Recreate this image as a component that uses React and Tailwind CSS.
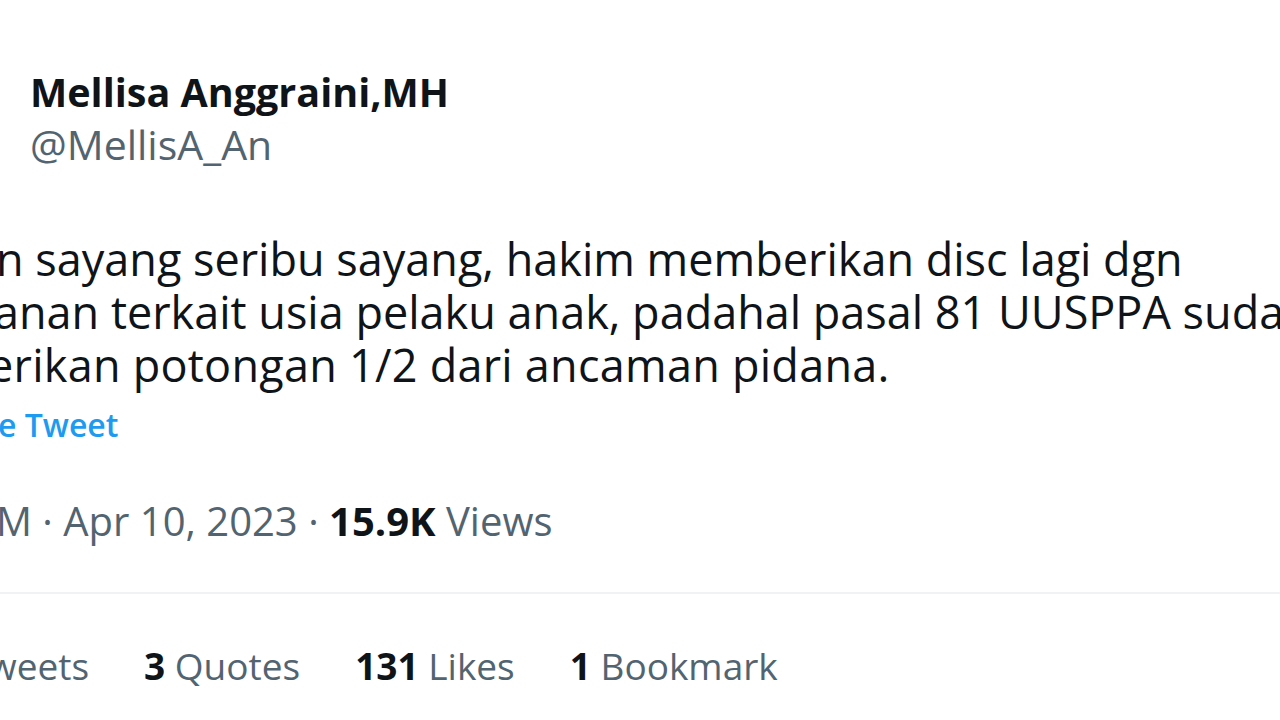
export default function App() {
  const font = { fontFamily: '"Open Sans", "Noto Sans", Arial, sans-serif' };
  return (
    <div className="w-[1280px] h-[720px] bg-white overflow-hidden text-[#0f1419]" style={font}>
      <div className="pl-[30px] pt-[68px]">
        <div className="text-[39.5px] font-bold leading-[48px] text-[#0f1419]">Mellisa Anggraini,MH</div>
        <div className="text-[41px] leading-[56px] text-[#536471]">@MellisA_An</div>
      </div>
      <div className="mt-[60px] -ml-[4px] text-[45px] leading-[53px] whitespace-nowrap">
        <div>n sayang seribu sayang, hakim memberikan disc lagi dgn</div>
        <div className="-ml-[2px]">anan terkait usia pelaku anak, padahal pasal 81 UUSPPA sudah</div>
        <div className="-ml-[8px] tracking-[0.25px]">erikan potongan 1/2 dari ancaman pidana.</div>
      </div>
      <div className="mt-[14px] -ml-[2px] text-[32px] leading-[40px] font-semibold text-[#1d9bf0] whitespace-nowrap">e Tweet</div>
      <div className="mt-[54px] -ml-[4px] text-[40px] leading-[44px] text-[#536471] whitespace-nowrap">
        M · Apr 10, 2023 · <span className="font-bold text-[#0f1419]">15.9K</span> Views
      </div>
      <div className="mt-[49px] h-[2px] bg-[#eff3f4] w-full" />
      <div className="mt-[50px] flex items-center gap-[55px] text-[37px] leading-[44px] text-[#536471] whitespace-nowrap -ml-[12px]">
        <span>weets</span>
        <span><span className="font-bold text-[#0f1419]">3</span> Quotes</span>
        <span><span className="font-bold text-[#0f1419]">131</span> Likes</span>
        <span><span className="font-bold text-[#0f1419]">1</span> Bookmark</span>
      </div>
    </div>
  );
}
